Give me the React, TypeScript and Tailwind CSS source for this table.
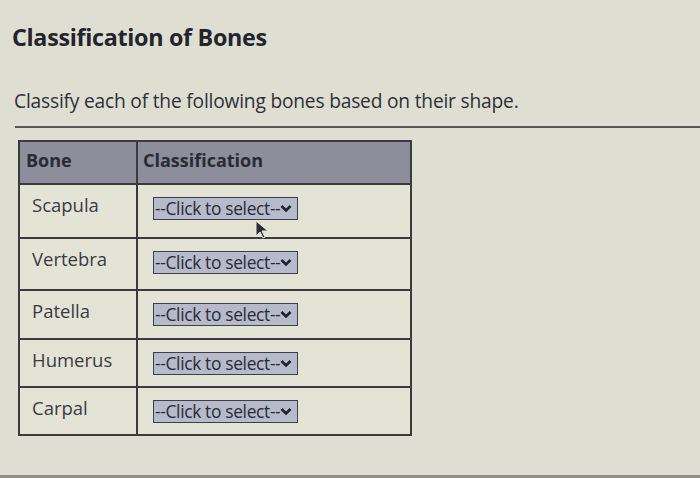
import React from "react";

const rows = [
  { name: "Scapula", h: "h-[54px]" },
  { name: "Vertebra", h: "h-[52px]" },
  { name: "Patella", h: "h-[49px]" },
  { name: "Humerus", h: "h-[48px]" },
  { name: "Carpal", h: "h-[48px]" },
];

function Select() {
  return (
    <div className="flex h-[23px] w-[145px] items-center overflow-hidden border border-[#3d3f4a] bg-[#b6bacb] pl-[1px] text-[17.4px] leading-none text-[#2a2c36]">
      <span className="whitespace-nowrap tracking-[-0.35px]">--Click to select--</span>
      <svg width="12" height="9" viewBox="0 0 12 9" className="shrink-0">
        <path d="M1.5 2 L6 6.5 L10.5 2" fill="none" stroke="#1e2030" strokeWidth="2.6" />
      </svg>
    </div>
  );
}

export default function App() {
  return (
    <div
      className="relative h-[478px] w-[700px] overflow-hidden bg-[#dedfd2] text-[#2f3038]"
      style={{ fontFamily: "'Open Sans', Lato, sans-serif" }}
    >
      <div className="pl-[12px] pt-[23px] text-[23.3px] font-bold leading-[28px] tracking-[-0.3px] text-[#23242c]">
        Classification of Bones
      </div>
      <div className="pl-[14px] pt-[37px] text-[19.2px] leading-[25px] tracking-[-0.2px] text-[#2e2f38]">
        Classify each of the following bones based on their shape.
      </div>
      <div className="ml-[15px] mt-[13px] h-[2px] bg-[#55565c]" />
      <div className="ml-[18px] mt-[12px] w-[394px] border-2 border-[#3a3b40]">
        <div className="flex h-[41px] bg-[#8d8d9c]">
          <div className="w-[118px] border-r-2 border-[#3a3b40] pl-[6px] pt-[5px] text-[18px] font-bold text-[#2a2a34]">
            Bone
          </div>
          <div className="flex-1 pl-[5px] pt-[5px] text-[18px] font-bold text-[#2a2a34]">
            Classification
          </div>
        </div>
        {rows.map((r) => (
          <div key={r.name} className={`flex ${r.h} border-t-2 border-[#3a3b40] bg-[#e3e4d6]`}>
            <div className="w-[118px] border-r-2 border-[#3a3b40] pl-[12px] pt-[6px] text-[18.5px] text-[#3a3b42]">
              {r.name}
            </div>
            <div className="flex-1 pl-[15px] pt-[12px]">
              <Select />
            </div>
          </div>
        ))}
      </div>
      <svg className="absolute left-[254px] top-[220px]" width="16" height="20" viewBox="0 0 16 20">
        <path d="M2 1 L2 16 L6 12 L9 18 L11 17 L8 11 L14 11 Z" fill="#2a2b33" stroke="#e8e8e0" strokeWidth="1" />
      </svg>
      <div className="absolute bottom-0 left-0 h-[3px] w-full bg-[#8f8f8a]" />
    </div>
  );
}
